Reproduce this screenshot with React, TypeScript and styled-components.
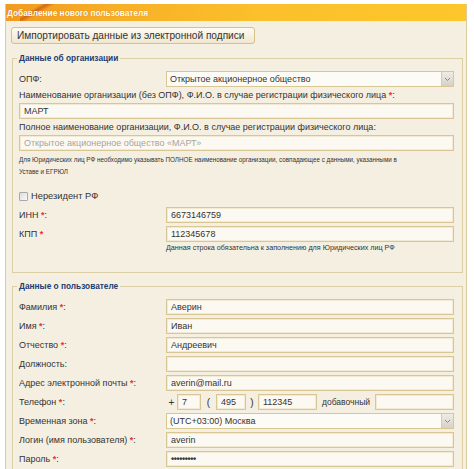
import React from "react";
import styled, { createGlobalStyle } from "styled-components";

const Global = createGlobalStyle`
  html, body { margin: 0; padding: 0; background: #ffffff; overflow: hidden; }
  body { font-family: "Liberation Sans", Arial, sans-serif; color: #333; }
`;

const Panel = styled.div`
  margin: 4px 0 0 5px;
  width: 462px;
  box-sizing: border-box;
  border-left: 1px solid #dccb9f;
  border-right: 1px solid #dccb9f;
  background: #f5efe1;
  min-height: 470px;
`;

const Header = styled.div`
  height: 17px;
  display: flex;
  align-items: center;
  padding-left: 1px;
  color: #fff;
  font-weight: bold;
  font-size: 8.3px;
  text-shadow: 0 0 1px rgba(150, 70, 0, 0.5);
  background:
    linear-gradient(150deg, transparent 0 32%, rgba(185, 60, 10, 0.55) 42%, transparent 55%) no-repeat 14px 0 / 36px 100%,
    linear-gradient(90deg, #f29a20, #f8b027 25%, #fbc02b 55%, #fdc62c);
`;

const Body = styled.div`
  padding: 6px 3px 0 6px;
`;

const ImportButton = styled.div`
  margin-left: -1px;
  width: 244px;
  height: 17px;
  box-sizing: border-box;
  border: 1px solid #d4c18c;
  border-radius: 3px;
  background: linear-gradient(#fefbf3, #f1e7cf);
  display: flex;
  align-items: center;
  padding-left: 5px;
  font-size: 10.1px;
  color: #333;
  white-space: nowrap;
`;

const Fieldset = styled.fieldset<{ $top: number }>`
  margin: ${(p) => p.$top}px 0 0 0;
  padding: 8px 8px 19px 6px;
  border: 1px solid #dccfa6;
  min-inline-size: auto;
`;

const Legend = styled.legend`
  padding: 0 2px;
  margin-left: -2px;
  font-size: 8.3px;
  line-height: 10px;
  font-weight: bold;
  color: #223d73;
`;

const FieldRow = styled.div<{ $mt?: number }>`
  display: grid;
  grid-template-columns: 147px 1fr;
  align-items: center;
  height: 16px;
  margin-top: ${(p) => p.$mt ?? 0}px;
`;

const Label = styled.div`
  font-size: 9px;
  color: #333;
  white-space: nowrap;
`;

const StackLabel = styled(Label)`
  line-height: 16px;
`;

const Req = styled.span`
  color: #e2352c;
  font-weight: bold;
`;

const Input = styled.div<{ $w?: number; $muted?: boolean; $dots?: boolean }>`
  height: 16px;
  box-sizing: border-box;
  ${(p) => (p.$w ? `width: ${p.$w}px; flex: none;` : "flex: 1;")}
  border: 1px solid #d8c795;
  box-shadow: inset 0 0 0 1px #f3ead3;
  background: #fcf9f2;
  display: flex;
  align-items: center;
  padding-left: 4px;
  font-size: 9px;
  font-weight: ${(p) => (p.$dots ? "bold" : "normal")};
  letter-spacing: ${(p) => (p.$dots ? "-0.4px" : "0")};
  color: ${(p) => (p.$muted ? "#a9a49a" : "#333")};
  white-space: nowrap;
  overflow: hidden;
`;

const SelectBox = styled.div`
  height: 16px;
  box-sizing: border-box;
  border: 1px solid #d8c795;
  background: #fdfbf6;
  display: flex;
  align-items: center;
  font-size: 9px;
  color: #333;
`;

const SelectText = styled.div`
  flex: 1;
  padding-left: 3px;
  white-space: nowrap;
`;

const SelectArrow = styled.div`
  width: 12px;
  height: 14px;
  box-sizing: border-box;
  border-left: 1px solid #d2ccbf;
  background: linear-gradient(#efece5, #d6d1c6);
  display: flex;
  align-items: center;
  justify-content: center;
`;

const Note = styled.div<{ $mt?: number; $size: number; $lh: number; $indent?: number }>`
  margin-top: ${(p) => p.$mt ?? 0}px;
  margin-left: ${(p) => p.$indent ?? 0}px;
  font-size: ${(p) => p.$size}px;
  line-height: ${(p) => p.$lh}px;
  color: #333;
  white-space: nowrap;
`;

const CheckRow = styled.div`
  margin-top: 11px;
  height: 14px;
  display: flex;
  align-items: center;
  gap: 3px;
  font-size: 9.3px;
  color: #333;
`;

const CheckBox = styled.span`
  width: 9px;
  height: 9px;
  box-sizing: border-box;
  border: 1px solid #a9a9a9;
  border-radius: 1px;
  background: linear-gradient(135deg, #dcdcdc, #fafafa);
`;

const Line = styled.div`
  display: flex;
  align-items: center;
`;

const Sign = styled.span<{ $w: number }>`
  width: ${(p) => p.$w}px;
  flex: none;
  text-align: center;
  font-size: 10px;
  color: #333;
`;

const ExtLabel = styled.span`
  width: 58px;
  flex: none;
  text-align: center;
  font-size: 8.5px;
  color: #333;
`;

const Arrow = () => (
  <svg width="7" height="5" viewBox="0 0 7 5">
    <path d="M1 1 L3.5 3.5 L6 1" fill="none" stroke="#8d8a83" strokeWidth="1" />
  </svg>
);

const Select = ({ value }: { value: string }) => (
  <SelectBox>
    <SelectText>{value}</SelectText>
    <SelectArrow>
      <Arrow />
    </SelectArrow>
  </SelectBox>
);

const Field = ({
  label,
  req,
  mt,
  children,
}: {
  label: string;
  req?: boolean;
  mt?: number;
  children: React.ReactNode;
}) => (
  <FieldRow $mt={mt}>
    <Label>
      {label}
      {req && (
        <>
          {" "}
          <Req>*</Req>
        </>
      )}
      {req && ":"}
    </Label>
    {children}
  </FieldRow>
);

export default function App() {
  return (
    <>
      <Global />
      <Panel>
        <Header>Добавление нового пользователя</Header>
        <Body>
          <ImportButton>Импортировать данные из электронной подписи</ImportButton>

          <Fieldset $top={9}>
            <Legend>Данные об организации</Legend>
            <Field label="ОПФ:">
              <Select value="Открытое акционерное общество" />
            </Field>
            <StackLabel>
              Наименование организации (без ОПФ), Ф.И.О. в случае регистрации физического лица <Req>*</Req>:
            </StackLabel>
            <Line>
              <Input>МАРТ</Input>
            </Line>
            <StackLabel>
              Полное наименование организации, Ф.И.О. в случае регистрации физического лица:
            </StackLabel>
            <Line>
              <Input $muted>Открытое акционерное общество «МАРТ»</Input>
            </Line>
            <Note $mt={3} $size={6.3} $lh={12}>
              Для Юридических лиц РФ необходимо указывать ПОЛНОЕ наименование организации, совпадающее с данными, указанными в
              <br />
              Уставе и ЕГРЮЛ
            </Note>
            <CheckRow>
              <CheckBox />
              Нерезидент РФ
            </CheckRow>
            <FieldRow $mt={4}>
              <Label>
                ИНН <Req>*</Req>:
              </Label>
              <Line>
                <Input>6673146759</Input>
              </Line>
            </FieldRow>
            <FieldRow $mt={3}>
              <Label>
                КПП <Req>*</Req>
              </Label>
              <Line>
                <Input>112345678</Input>
              </Line>
            </FieldRow>
            <Note $size={7.2} $lh={11} $indent={147}>
              Данная строка обязательна к заполнению для Юридических лиц РФ
            </Note>
          </Fieldset>

          <Fieldset $top={8}>
            <Legend>Данные о пользователе</Legend>
            <Field label="Фамилия" req>
              <Line><Input>Аверин</Input></Line>
            </Field>
            <Field label="Имя" req mt={3}>
              <Line><Input>Иван</Input></Line>
            </Field>
            <Field label="Отчество" req mt={3}>
              <Line><Input>Андреевич</Input></Line>
            </Field>
            <Field label="Должность:" mt={3}>
              <Line><Input /></Line>
            </Field>
            <Field label="Адрес электронной почты" req mt={3}>
              <Line><Input>averin@mail.ru</Input></Line>
            </Field>
            <Field label="Телефон" req mt={3}>
              <Line>
                <Sign $w={11}>+</Sign>
                <Input $w={24}>7</Input>
                <Sign $w={15}>(</Sign>
                <Input $w={30}>495</Input>
                <Sign $w={12}>)</Sign>
                <Input $w={59}>112345</Input>
                <ExtLabel>добавочный</ExtLabel>
                <Input />
              </Line>
            </Field>
            <Field label="Временная зона" req mt={3}>
              <Select value="(UTC+03:00) Москва" />
            </Field>
            <Field label="Логин (имя пользователя)" req mt={3}>
              <Line><Input>averin</Input></Line>
            </Field>
            <Field label="Пароль" req mt={3}>
              <Line><Input $dots>•••••••••</Input></Line>
            </Field>
          </Fieldset>
        </Body>
      </Panel>
    </>
  );
}
